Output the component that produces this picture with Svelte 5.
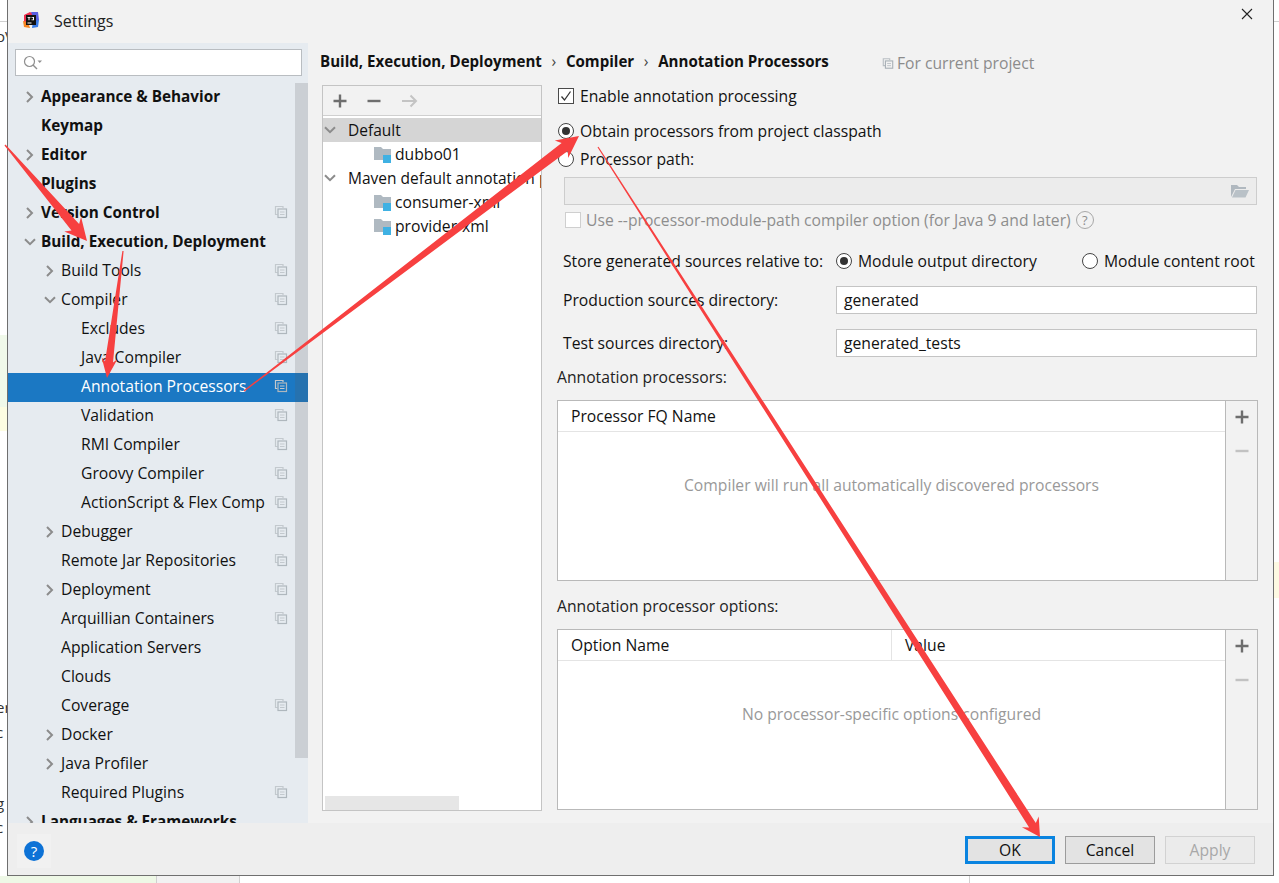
<script>
	const left = [
		{ t: 'Appearance & Behavior', l: 0, b: true, c: 'r' },
		{ t: 'Keymap', l: 0, b: true },
		{ t: 'Editor', l: 0, b: true, c: 'r' },
		{ t: 'Plugins', l: 0, b: true },
		{ t: 'Version Control', l: 0, b: true, c: 'r', p: true },
		{ t: 'Build, Execution, Deployment', l: 0, b: true, c: 'd' },
		{ t: 'Build Tools', l: 1, c: 'r', p: true },
		{ t: 'Compiler', l: 1, c: 'd', p: true },
		{ t: 'Excludes', l: 2, p: true },
		{ t: 'Java Compiler', l: 2, p: true },
		{ t: 'Annotation Processors', l: 2, p: true, sel: true },
		{ t: 'Validation', l: 2, p: true },
		{ t: 'RMI Compiler', l: 2, p: true },
		{ t: 'Groovy Compiler', l: 2, p: true },
		{ t: 'ActionScript & Flex Comp', l: 2, p: true },
		{ t: 'Debugger', l: 1, c: 'r', p: true },
		{ t: 'Remote Jar Repositories', l: 1, p: true },
		{ t: 'Deployment', l: 1, c: 'r', p: true },
		{ t: 'Arquillian Containers', l: 1, p: true },
		{ t: 'Application Servers', l: 1 },
		{ t: 'Clouds', l: 1 },
		{ t: 'Coverage', l: 1, p: true },
		{ t: 'Docker', l: 1, c: 'r' },
		{ t: 'Java Profiler', l: 1, c: 'r' },
		{ t: 'Required Plugins', l: 1, p: true },
		{ t: 'Languages & Frameworks', l: 0, b: true, c: 'r' }
	];

	const profiles = [
		{ t: 'Default', group: true, sel: true },
		{ t: 'dubbo01' },
		{ t: 'Maven default annotation processors', group: true },
		{ t: 'consumer-xml' },
		{ t: 'provider-xml' }
	];

	// tapered annotation arrows: tail point -> tip
	const arrows = [
		{ x1: 5, y1: 145, x2: 87, y2: 241, w: 10, hl: 22, hw: 11 },
		{ x1: 123, y1: 251, x2: 107, y2: 378, w: 8, hl: 20, hw: 8 },
		{ x1: 244, y1: 391, x2: 579, y2: 136, w: 10, hl: 22, hw: 11 },
		{ x1: 598, y1: 147, x2: 1040, y2: 837, w: 8, hl: 18, hw: 10 }
	];

	function arrowPoints(a) {
		const dx = a.x2 - a.x1;
		const dy = a.y2 - a.y1;
		const len = Math.hypot(dx, dy);
		const ux = dx / len;
		const uy = dy / len;
		const nx = -uy;
		const ny = ux;
		const bx = a.x2 - ux * a.hl;
		const by = a.y2 - uy * a.hl;
		const nbx = a.x2 - ux * (a.hl - 4);
		const nby = a.y2 - uy * (a.hl - 4);
		const pts = [
			[a.x1 + nx * 0.6, a.y1 + ny * 0.6],
			[nbx + (nx * a.w) / 2, nby + (ny * a.w) / 2],
			[bx + nx * a.hw, by + ny * a.hw],
			[a.x2, a.y2],
			[bx - nx * a.hw, by - ny * a.hw],
			[nbx - (nx * a.w) / 2, nby - (ny * a.w) / 2],
			[a.x1 - nx * 0.6, a.y1 - ny * 0.6]
		];
		return pts.map((p) => p[0].toFixed(1) + ',' + p[1].toFixed(1)).join(' ');
	}
</script>

{#snippet copyIcon()}
	<svg class="copy" width="14" height="14" viewBox="0 0 14 14" fill="none">
		<path d="M9 3V1.500H1.500V9.500H3.500" stroke="#c3c9ce" stroke-width="1.200" />
		<rect x="4" y="4" width="8.500" height="8.500" stroke="#afb7bd" stroke-width="1.200" />
		<path d="M6 7h4.500M6 9.500h4.500" stroke="#c3c9ce" />
	</svg>
{/snippet}

{#snippet chevron(dir)}
	<svg width="12" height="12" viewBox="0 0 12 12" fill="none">
		{#if dir === 'r'}
			<path d="M3 1 8 6l-5 5" stroke="#8c8c8c" stroke-width="2" />
		{:else}
			<path d="M1 3.200 6 8.200l5-5" stroke="#8c8c8c" stroke-width="2" />
		{/if}
	</svg>
{/snippet}

{#snippet moduleIcon()}
	<svg class="mod" width="18" height="18" viewBox="0 0 18 18">
		<path d="M0 2h7l2 2h8v11H0z" fill="#afb9c1" />
		<rect x="9" y="10" width="8" height="8" fill="#3fb1e3" />
	</svg>
{/snippet}

{#snippet tbl(cols, msg)}
	<div class="tbl">
		<div class="tbl-main">
			<div class="tbl-head">
				{#each cols as c, i}
					<div class="tbl-col" class:first={i === 0} class:rest={i > 0}>{c}</div>
				{/each}
			</div>
			<div class="tbl-empty">{msg}</div>
		</div>
		<div class="tbl-tools">
			<svg width="14" height="14" viewBox="0 0 14 14"><path d="M7 0.500v13M0.500 7h13" stroke="#6e6e6e" stroke-width="2.400" /></svg>
			<svg width="14" height="14" viewBox="0 0 14 14"><path d="M0.500 7h13" stroke="#c2c2c2" stroke-width="2.400" /></svg>
		</div>
	</div>
{/snippet}

<div class="page">
	<!-- bits of the IDE window behind the dialog -->
	<div class="behind">
		<span class="frag" style="top:26px">oV</span>
		<span class="frag" style="top:697px">er</span>
		<span class="frag" style="top:722px">c</span>
		<span class="frag" style="top:793px">g</span>
		<span class="frag" style="top:817px">c</span>
		<div class="tint-green"></div>
		<div class="tint-yellow"></div>
		<div class="tint-right"></div>
		<div class="strip-green"></div>
		<div class="strip-grey"></div>
		<div class="strip-line"></div>
		<div class="top-line"></div>
		<div class="top-line right"></div>
	</div>

	<div class="dialog">
		<header class="title">
			<svg class="logo" width="16" height="16" viewBox="0 0 16 16">
				<path d="M1 3 7 0l4 2-3 8-7 1z" fill="#f0304f" />
				<path d="M8 0h7l1 8-4 3z" fill="#5a5fe0" />
				<path d="M0 9l5 1 2 6-6-1z" fill="#f58420" />
				<path d="M10 9l6-1-1 7-6 1z" fill="#3a7de8" />
				<rect x="3" y="3" width="10" height="10" fill="#111" />
				<rect x="4.500" y="10.500" width="4" height="1" fill="#fff" />
				<path d="M4.500 5h3v.8h-1v2.400h-1V5.800h-1zM8.500 5h2.500v3.200H8.500V7.400h1.500V5.800h-1.500z" fill="#fff" />
			</svg>
			<span class="title-text">Settings</span>
			<svg class="close" width="12" height="12" viewBox="0 0 12 12"><path d="M1 1l10 10M11 1 1 11" stroke="#222" stroke-width="1.100" /></svg>
		</header>

		<div class="body">
			<aside class="side">
				<div class="search">
					<svg width="20" height="16" viewBox="0 0 20 16" fill="none">
						<circle cx="6.500" cy="6.500" r="5" stroke="#8f8f8f" stroke-width="1.200" />
						<path d="M10 10l4 4" stroke="#8f8f8f" stroke-width="1.400" />
						<path d="M14.500 5.500h4.500l-2.250 2.500z" fill="#8f8f8f" />
					</svg>
				</div>
				<div class="tree-wrap">
					<div class="tree">
						{#each left as r}
							<div class="row lvl{r.l}" class:bold={r.b} class:sel={r.sel}>
								<span class="chev">
									{#if r.c}{@render chevron(r.c)}{/if}
								</span>
								<span class="row-text">{r.t}</span>
								{#if r.p}{@render copyIcon()}{/if}
							</div>
						{/each}
					</div>
					<div class="vbar"><div class="vthumb"></div></div>
				</div>
			</aside>

			<main class="content">
				<div class="crumbs">
					<b>Build, Execution, Deployment</b>
					<span class="sep">›</span>
					<b>Compiler</b>
					<span class="sep">›</span>
					<b>Annotation Processors</b>
					<span class="scope">
						<svg width="12" height="13" viewBox="0 0 14 14" fill="none">
							<path d="M9 3V1.500H1.500V9.500H3.500" stroke="#b9bfc4" stroke-width="1.300" />
							<rect x="4" y="4" width="8.500" height="8.500" stroke="#a9b1b7" stroke-width="1.300" />
							<path d="M6 7h4.500M6 9.500h4.500" stroke="#b9bfc4" />
						</svg>
						For current project
					</span>
				</div>

				<div class="split">
					<section class="profiles">
						<div class="prof-tools">
							<svg width="14" height="14" viewBox="0 0 14 14"><path d="M7 0.500v13M0.500 7h13" stroke="#6e6e6e" stroke-width="2.400" /></svg>
							<svg width="14" height="14" viewBox="0 0 14 14"><path d="M0.500 7h13" stroke="#6e6e6e" stroke-width="2.400" /></svg>
							<svg width="17" height="14" viewBox="0 0 17 14" fill="none"><path d="M1 7h14M9.500 1.500 15 7l-5.500 5.500" stroke="#c4c4c4" stroke-width="2" /></svg>
						</div>
						<div class="prof-tree">
							{#each profiles as p}
								{#if p.group}
									<div class="prow group" class:sel={p.sel}>
										<span class="pchev">{@render chevron('d')}</span>
										<span>{p.t}</span>
									</div>
								{:else}
									<div class="prow leaf">
										{@render moduleIcon()}
										<span>{p.t}</span>
									</div>
								{/if}
							{/each}
						</div>
						<div class="hbar"><div class="hthumb"></div></div>
					</section>

					<section class="form">
						<label class="line first">
							<span class="check">
								<svg width="14" height="14" viewBox="0 0 14 14" fill="none"><path d="M2.500 7.500 5.500 11 11.500 2.500" stroke="#333" stroke-width="1.300" /></svg>
							</span>
							Enable annotation processing
						</label>
						<label class="line radio-top">
							<span class="radio on"></span>
							Obtain processors from project classpath
						</label>
						<label class="line radio-second">
							<span class="radio"></span>
							Processor path:
						</label>
						<div class="path-field">
							<svg width="18" height="14" viewBox="0 0 18 14">
								<path d="M0 1h6l2 2h7v2H4L0 13z" fill="#b0b8bf" />
								<path d="M4.500 6H18l-3.500 7.500H1z" fill="#b9c1c7" />
							</svg>
						</div>
						<div class="line use">
							<span class="check off"></span>
							<span class="use-text">Use --processor-module-path compiler option (for Java 9 and later)</span>
							<span class="help">?</span>
						</div>

						<div class="line store">
							<span class="store-label">Store generated sources relative to:</span>
							<span class="radio on"></span>
							<span class="opt-a">Module output directory</span>
							<span class="radio"></span>
							<span class="opt-b">Module content root</span>
						</div>
						<div class="line field-row prod">
							<span class="field-label">Production sources directory:</span>
							<span class="input">generated</span>
						</div>
						<div class="line field-row test">
							<span class="field-label">Test sources directory:</span>
							<span class="input">generated_tests</span>
						</div>

						<div class="cap cap-a">Annotation processors:</div>
						{@render tbl(['Processor FQ Name'], 'Compiler will run all automatically discovered processors')}
						<div class="cap cap-b">Annotation processor options:</div>
						{@render tbl(['Option Name', 'Value'], 'No processor-specific options configured')}
					</section>
				</div>
			</main>
		</div>

		<footer class="foot">
			<span class="help-wrap"><span class="help-btn">?</span></span>
			<div class="buttons">
				<span class="btn ok">OK</span>
				<span class="btn">Cancel</span>
				<span class="btn dis">Apply</span>
			</div>
		</footer>
	</div>

	<svg class="arrows" width="1279" height="883" viewBox="0 0 1279 883">
		{#each arrows as a}
			<polygon points={arrowPoints(a)} fill="#f74040" />
		{/each}
	</svg>
</div>

<style>
	:global(body) {
		margin: 0;
		background: #fff;
	}

	.page {
		position: relative;
		width: 1279px;
		height: 883px;
		overflow: hidden;
		background: #fff;
		font-family: 'Open Sans', 'Noto Sans', sans-serif;
		font-size: 15.7px;
		color: #111;
	}

	.behind .frag {
		position: absolute;
		left: -4px;
		font-size: 15px;
		color: #333;
	}
	.tint-green {
		position: absolute;
		left: 0;
		top: 335px;
		width: 7px;
		height: 72px;
		background: #f0f9ea;
	}
	.tint-yellow {
		position: absolute;
		left: 0;
		top: 407px;
		width: 7px;
		height: 24px;
		background: #fdfde2;
	}
	.tint-right {
		position: absolute;
		left: 1272px;
		top: 562px;
		width: 7px;
		height: 36px;
		background: #fdf9e2;
	}
	.strip-green {
		position: absolute;
		left: 0;
		top: 876px;
		width: 156px;
		height: 7px;
		background: #eef8e6;
	}
	.strip-grey {
		position: absolute;
		left: 156px;
		top: 876px;
		width: 84px;
		height: 7px;
		background: #f2f2f2;
		border-right: 1px solid #d0d0d0;
		border-left: 1px solid #d0d0d0;
		box-sizing: border-box;
	}
	.strip-line {
		position: absolute;
		left: 969px;
		top: 876px;
		width: 1px;
		height: 7px;
		background: #d0d0d0;
	}
	.top-line {
		position: absolute;
		left: 0;
		top: 21px;
		width: 7px;
		height: 1px;
		background: #d0d0d0;
	}
	.top-line.right {
		left: 1272px;
	}

	.dialog {
		position: absolute;
		left: 7px;
		top: -1px;
		width: 1265px;
		height: 876px;
		border: 1px solid #6f6f6f;
		border-top: none;
		background: #f2f2f2;
		display: flex;
		flex-direction: column;
	}

	.title {
		height: 44px;
		flex: none;
		display: flex;
		align-items: center;
		padding: 0 19px 0 15px;
		box-sizing: border-box;
		position: relative;
	}
	.logo {
		margin-right: 15px;
		margin-top: -2px;
	}
	.title-text {
		font-size: 16px;
		color: #222;
	}
	.close {
		position: absolute;
		top: 9px;
		right: 20px;
	}

	.body {
		flex: 1;
		display: flex;
		min-height: 0;
	}

	.side {
		width: 300px;
		flex: none;
		background: #e6ebf0;
		display: flex;
		flex-direction: column;
		overflow: hidden;
	}
	.search {
		margin: 6px 6px 7px 7px;
		height: 27px;
		flex: none;
		box-sizing: border-box;
		background: #fff;
		border: 1px solid #b9bdc1;
		display: flex;
		align-items: center;
		padding-left: 7px;
	}
	.tree-wrap {
		flex: 1;
		display: flex;
		min-height: 0;
	}
	.tree {
		flex: 1;
		min-width: 0;
	}
	.vbar {
		width: 13px;
		flex: none;
		position: relative;
	}
	.vthumb {
		height: 675px;
		background: rgba(90, 90, 90, 0.19);
	}
	.row {
		height: 29px;
		display: flex;
		align-items: center;
		width: 300px;
		box-sizing: border-box;
		position: relative;
		padding-bottom: 4px;
	}
	.row.sel {
		background: #1b78c3;
		color: #fff;
	}
	.row.lvl0 {
		padding-left: 14px;
	}
	.row.lvl1 {
		padding-left: 34px;
	}
	.row.lvl2 {
		padding-left: 53px;
	}
	.row.bold {
		font-weight: 700;
		font-size: 15.3px;
	}
	.chev {
		width: 18px;
		height: 12px;
		flex: none;
		display: flex;
		margin-right: 1px;
		padding-left: 2px;
		box-sizing: border-box;
		position: relative;
		top: 1px;
	}
	.row.lvl2 .chev {
		width: 19px;
	}
	.row-text {
		white-space: nowrap;
	}
	.copy {
		position: absolute;
		left: 266px;
		top: 6px;
	}

	.content {
		flex: 1;
		min-width: 0;
		display: flex;
		flex-direction: column;
		padding: 0 15px 12px 14px;
	}

	.crumbs {
		height: 42px;
		flex: none;
		display: flex;
		align-items: center;
		padding-bottom: 6px;
		box-sizing: border-box;
		white-space: nowrap;
		margin-left: -2px;
	}
	.crumbs b {
		font-weight: 700;
		font-size: 15.1px;
	}
	.sep {
		width: 24px;
		text-align: center;
		color: #444;
	}
	.scope {
		margin-left: 53px;
		margin-top: 4px;
		color: #8c8c8c;
		display: inline-flex;
		align-items: center;
		gap: 3px;
	}

	.split {
		flex: 1;
		min-height: 0;
		display: flex;
	}

	.profiles {
		width: 220px;
		flex: none;
		box-sizing: border-box;
		border: 1px solid #c4c4c4;
		background: #fff;
		display: flex;
		flex-direction: column;
		position: relative;
		overflow: hidden;
	}
	.prof-tools {
		height: 30px;
		flex: none;
		background: #f2f2f2;
		border-bottom: 1px solid #d0d0d0;
		display: flex;
		align-items: center;
		padding-left: 10px;
		gap: 20px;
		box-sizing: border-box;
	}
	.prof-tree {
		flex: 1;
		padding-top: 2px;
		overflow: hidden;
	}
	.prow {
		height: 24px;
		display: flex;
		align-items: center;
		white-space: nowrap;
	}
	.prow.sel {
		background: #d5d5d5;
	}
	.prow.group {
		padding-left: 1px;
		font-size: 15.5px;
	}
	.pchev {
		width: 24px;
		height: 12px;
		flex: none;
		display: flex;
	}
	.prow.leaf {
		padding-left: 51px;
	}
	.mod {
		flex: none;
		margin-right: 3px;
	}
	.hbar {
		position: absolute;
		left: 2px;
		right: 2px;
		bottom: 0;
		height: 14px;
	}
	.hthumb {
		width: 134px;
		height: 14px;
		background: #e6e6e6;
	}

	.form {
		flex: 1;
		min-width: 0;
		padding-left: 15px;
		display: flex;
		flex-direction: column;
	}
	.line {
		display: flex;
		align-items: center;
		white-space: nowrap;
	}
	.line.first {
		padding-left: 1px;
		height: 22px;
	}
	.radio-top,
	.radio-second {
		padding-left: 1px;
		height: 22px;
	}
	.radio-top {
		margin-top: 13px;
	}
	.radio-second {
		margin-top: 6px;
	}
	.check {
		width: 16px;
		height: 16px;
		box-sizing: border-box;
		border: 1px solid #4a4a4a;
		background: #fff;
		margin-right: 6px;
		flex: none;
		display: flex;
		align-items: center;
		justify-content: center;
	}
	.check.off {
		border-color: #cfcfcf;
		margin-right: 5px;
	}
	.radio {
		width: 16px;
		height: 16px;
		box-sizing: border-box;
		border: 1px solid #444;
		border-radius: 50%;
		background: #fff;
		margin-right: 6px;
		flex: none;
		position: relative;
	}
	.radio.on::after {
		content: '';
		position: absolute;
		inset: 3px;
		border-radius: 50%;
		background: #333;
	}
	.path-field {
		margin: 7px 1px 0 7px;
		height: 28px;
		box-sizing: border-box;
		background: #ececec;
		border: 1px solid #cdcdcd;
		display: flex;
		align-items: center;
		justify-content: flex-end;
		padding-right: 7px;
		flex: none;
	}
	.use {
		margin-top: 4px;
		height: 22px;
		padding-left: 8px;
		color: #8e8e8e;
	}
	.help {
		width: 18px;
		height: 18px;
		margin-left: 5px;
		border: 1.5px solid #a8a8a8;
		border-radius: 50%;
		box-sizing: border-box;
		font-size: 13px;
		color: #8e8e8e;
		display: flex;
		align-items: center;
		justify-content: center;
	}
	.store {
		margin-top: 18px;
		height: 24px;
		padding-left: 6px;
	}
	.store-label {
		width: 273px;
		flex: none;
	}
	.opt-a {
		width: 224px;
		flex: none;
	}
	.opt-b {
		flex: none;
	}
	.field-row {
		height: 28px;
		padding-left: 6px;
		padding-right: 1px;
	}
	.prod {
		margin-top: 13px;
	}
	.test {
		margin-top: 15px;
	}
	.field-label {
		width: 273px;
		flex: none;
	}
	.input {
		flex: 1;
		height: 28px;
		box-sizing: border-box;
		background: #fff;
		border: 1px solid #c4c4c4;
		padding-left: 7px;
		display: flex;
		align-items: center;
	}
	.cap {
		height: 22px;
		display: flex;
		align-items: center;
		flex: none;
		color: #222;
	}
	.cap-a {
		margin-top: 9px;
		margin-bottom: 12px;
	}
	.cap-b {
		margin-top: 14px;
		margin-bottom: 12px;
	}
	.tbl {
		height: 181px;
		flex: none;
		display: flex;
		box-sizing: border-box;
		border: 1px solid #b9b9b9;
	}
	.tbl-main {
		flex: 1;
		min-width: 0;
		background: #fff;
		display: flex;
		flex-direction: column;
	}
	.tbl-head {
		height: 31px;
		flex: none;
		display: flex;
		border-bottom: 1px solid #e4e4e4;
		box-sizing: border-box;
	}
	.tbl-col {
		display: flex;
		align-items: center;
		box-sizing: border-box;
		padding-left: 13px;
	}
	.tbl-col.first {
		width: 333px;
	}
	.tbl-col.rest {
		border-left: 1px solid #e4e4e4;
		flex: 1;
	}
	.tbl-empty {
		flex: 1;
		display: flex;
		align-items: center;
		justify-content: center;
		color: #999;
		padding-bottom: 42px;
	}
	.tbl-tools {
		width: 31px;
		flex: none;
		border-left: 1px solid #b9b9b9;
		display: flex;
		flex-direction: column;
		align-items: center;
		padding-top: 9px;
		gap: 20px;
	}

	.foot {
		height: 52px;
		flex: none;
		background: #eeeeee;
		display: flex;
		align-items: center;
		justify-content: space-between;
		padding: 0 18px 0 9px;
		position: relative;
	}
	.help-wrap {
		padding: 7px;
		background: #f1f1f1;
		margin-top: 4px;
		display: flex;
	}
	.help-btn {
		width: 20px;
		height: 20px;
		border-radius: 50%;
		background: #0d72d6;
		color: #fff;
		font-size: 15px;
		display: flex;
		align-items: center;
		justify-content: center;
	}
	.buttons {
		display: flex;
		gap: 10px;
		margin-top: 2px;
	}
	.btn {
		width: 90px;
		height: 28px;
		box-sizing: border-box;
		background: #e3e3e3;
		border: 1px solid #9c9c9c;
		display: flex;
		align-items: center;
		justify-content: center;
	}
	.btn.ok {
		border: 3px solid #0a84e0;
	}
	.btn.dis {
		border-color: #d2d2d2;
		background: #ebebeb;
		color: #a8a8a8;
	}

	.arrows {
		position: absolute;
		left: 0;
		top: 0;
		pointer-events: none;
	}
</style>
